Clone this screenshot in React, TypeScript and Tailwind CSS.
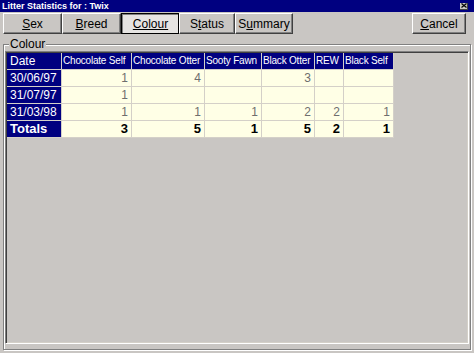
import React from "react";

const rows: { d: string; v: string[]; total?: boolean }[] = [
  { d: "30/06/97", v: ["1", "4", "", "3", "", ""] },
  { d: "31/07/97", v: ["1", "", "", "", "", ""] },
  { d: "31/03/98", v: ["1", "1", "1", "2", "2", "1"] },
  { d: "Totals", v: ["3", "5", "1", "5", "2", "1"], total: true },
];

const heads = ["Chocolate Self", "Chocolate Otter", "Sooty Fawn", "Black Otter", "REW", "Black Self"];

function RaisedButton({ children, w }: { children: React.ReactNode; w: string }) {
  return (
    <div
      className={`${w} h-[21px] flex items-center justify-center border border-t-white border-l-white border-r-[#404040] border-b-[#404040] shadow-[inset_-1px_-1px_0_#808080] text-[12px] text-black`}
    >
      {children}
    </div>
  );
}

export default function App() {
  return (
    <div
      className="w-[474px] h-[353px] bg-[#c9c6c3] flex flex-col overflow-hidden"
      style={{ fontFamily: '"Liberation Sans", Arial, sans-serif' }}
    >
      {/* Title bar */}
      <div className="h-[12px] bg-[#000080] flex items-center justify-between pl-[2px] pr-[6px]">
        <span className="text-white font-bold text-[9px] leading-[12px]">Litter Statistics for : Twix</span>
        <div className="w-[8px] h-[7px] bg-[#c9c6c3] border-r border-b border-[#404040] flex items-center justify-center">
          <svg width="6" height="5" viewBox="0 0 6 5">
            <path d="M0.5 0.5 L5.5 4.5 M5.5 0.5 L0.5 4.5" stroke="#000" strokeWidth="1.2" />
          </svg>
        </div>
      </div>

      {/* Toolbar */}
      <div className="mt-[1px] h-[21px] flex pl-[3px] pr-[8px]">
        <RaisedButton w="w-[59px]">
          <span><span className="underline">S</span>ex</span>
        </RaisedButton>
        <RaisedButton w="w-[59px]">
          <span><span className="underline">B</span>reed</span>
        </RaisedButton>
        <div className="w-[58px] h-[21px] border border-black bg-[#e6e4e2] shadow-[inset_1px_1px_0_#808080] flex items-center justify-center text-[12px] text-black pt-[1px] pl-[1px]">
          <span className="underline">Colour</span>
        </div>
        <RaisedButton w="w-[56px]">
          <span>S<span className="underline">t</span>atus</span>
        </RaisedButton>
        <RaisedButton w="w-[58px]">
          <span>S<span className="underline">u</span>mmary</span>
        </RaisedButton>
        <div className="flex-1" />
        <RaisedButton w="w-[54px]">
          <span><span className="underline">C</span>ancel</span>
        </RaisedButton>
      </div>

      {/* Group box */}
      <fieldset className="mt-[3px] ml-[3px] mr-[3px] border border-[#808080] shadow-[1px_1px_0_#ffffff,inset_1px_1px_0_#ffffff]">
        <legend className="ml-[5px] px-[1px] bg-[#c9c6c3] text-[12px] leading-[14px] text-black">Colour</legend>
        <div className="ml-[1px] mr-[1px] mb-[5px] h-[293px] border border-t-[#808080] border-l-[#808080] border-r-white border-b-white shadow-[inset_1px_1px_0_#404040,inset_-1px_-1px_0_#d4d0c8] p-[1px] bg-[#c9c6c3]">
          <div className="grid grid-cols-[55px_70px_73px_57px_53px_29px_50px] w-max">
            <div className="h-[17px] bg-[#000080] border-r border-b border-[#d4d0c8] text-white text-[12px] leading-[16px] pl-[3px]">
              Date
            </div>
            {heads.map((h) => (
              <div
                key={h}
                className="h-[17px] bg-[#000080] border-r border-b border-[#d4d0c8] text-white text-[10px] tracking-[-0.2px] leading-[16px] pl-[1px] whitespace-nowrap overflow-hidden"
              >
                {h}
              </div>
            ))}
            {rows.map((r) => (
              <React.Fragment key={r.d}>
                <div
                  className={`h-[17px] bg-[#000080] border-r border-b border-[#d4d0c8] text-white leading-[16px] pl-[3px] ${r.total ? "font-bold text-[13px]" : "text-[12px]"}`}
                >
                  {r.d}
                </div>
                {r.v.map((v, i) => (
                  <div
                    key={i}
                    className={`h-[17px] bg-[#ffffe6] border-r border-b border-[#d4d0c8] leading-[16px] pr-[3px] text-right ${r.total ? "font-bold text-black text-[13px]" : "text-[#6e6e6e] text-[12px]"}`}
                  >
                    {v}
                  </div>
                ))}
              </React.Fragment>
            ))}
          </div>
        </div>
      </fieldset>
    </div>
  );
}
